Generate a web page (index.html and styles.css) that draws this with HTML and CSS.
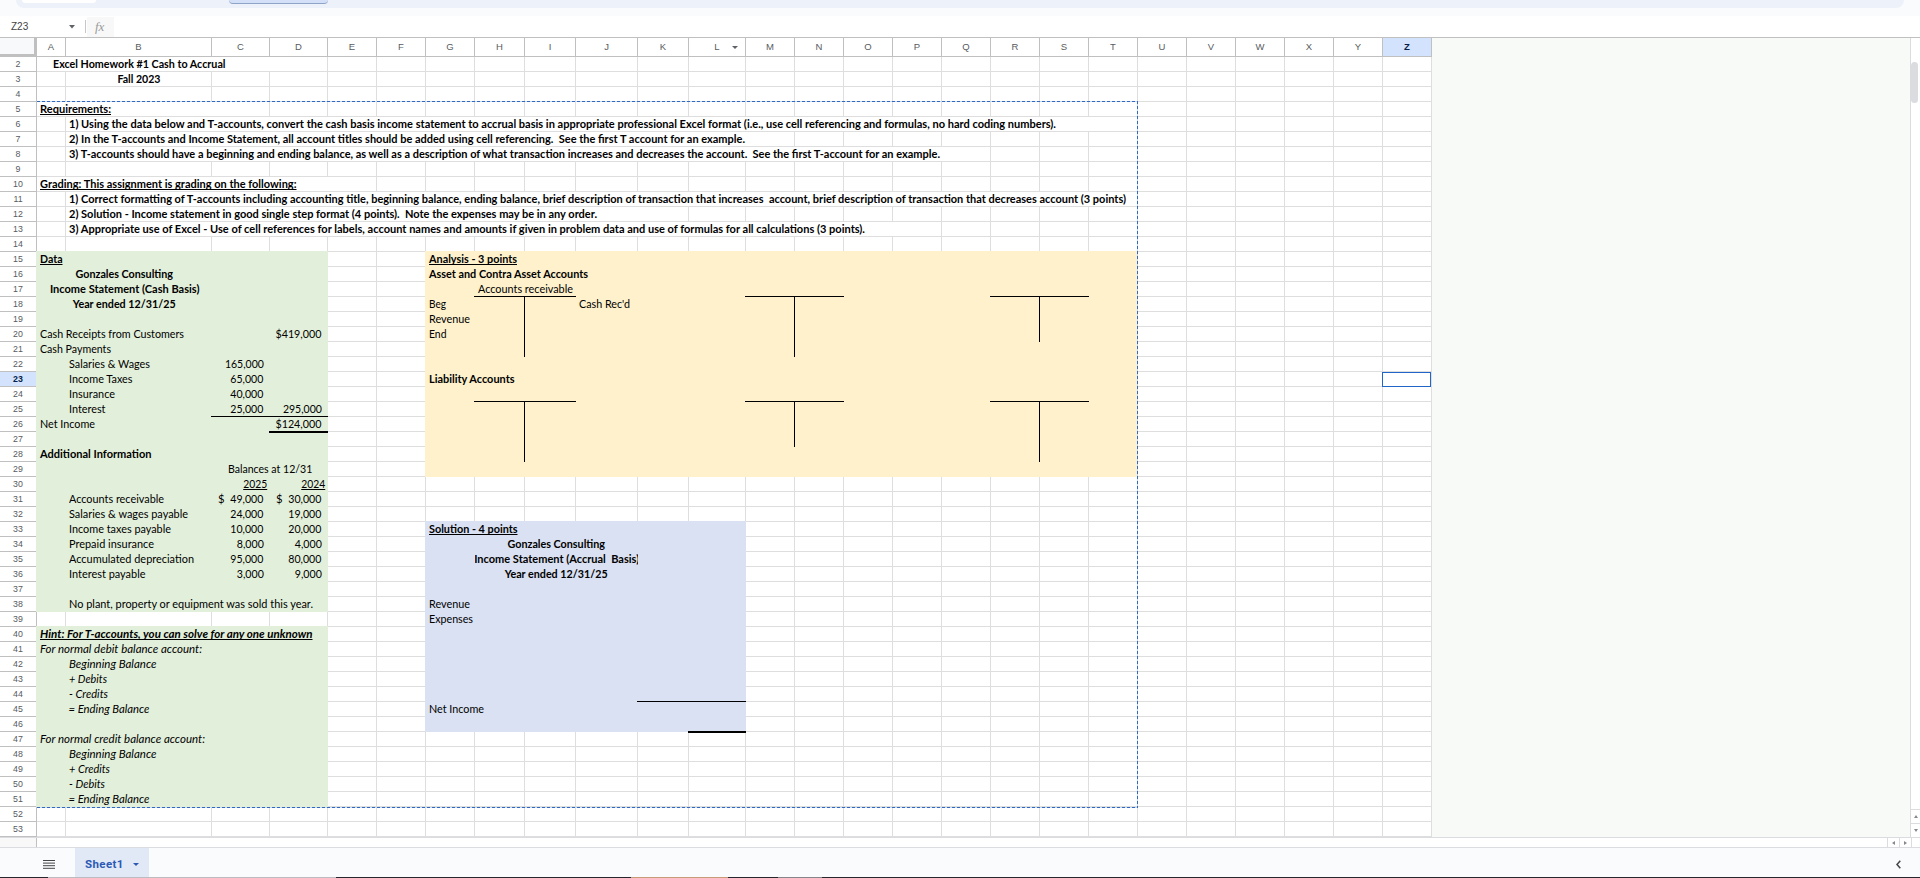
FILE: index.html
```html
<!DOCTYPE html>
<html lang="en">
<head>
<meta charset="utf-8">
<title>Sheet1</title>
<link rel="stylesheet" href="styles.css">
</head>
<body>
<div class="app">
  <div class="toolbar"><div class="menu-pill"></div><div class="active-pill"></div></div>
  <div class="formula-bar">
    <span class="cell-name">Z23</span>
    <svg class="name-arrow" viewBox="0 0 6 4"><path d="M0 0h6L3 3.5z"/></svg>
    <span class="divider"></span>
    <span class="fx">fx</span>
  </div>
  <main class="work">
    <div class="sheet" id="sheet"></div>
    <div class="blank"></div>
    <div class="vscroll">
      <div class="thumb"></div>
      <div class="step"><svg viewBox="0 0 4 3"><path d="M0 3h4L2 0z"/></svg></div>
      <div class="step"><svg viewBox="0 0 4 3"><path d="M0 0h4L2 3z"/></svg></div>
    </div>
  </main>
  <div class="hscroll">
    <div class="hscroll-corner"></div>
    <div class="hstep"><svg viewBox="0 0 3 4"><path d="M3 0v4L0 2z"/></svg></div>
    <div class="hstep"><svg viewBox="0 0 3 4"><path d="M0 0v4l3-2z"/></svg></div>
    <div class="hscroll-end"></div>
  </div>
  <footer class="tabs">
    <svg class="menu" viewBox="0 0 12 9"><path d="M0 .5h12M0 3.1h12M0 5.7h12M0 8.3h12"/></svg>
    <div class="tab"><span>Sheet1</span><svg viewBox="0 0 6 3"><path d="M0 0h6L3 3z"/></svg></div>
    <svg class="chevron" viewBox="0 0 5 9"><path d="M4.3.7L1 4.5l3.3 3.8"/></svg>
  </footer>
  <div class="edge"><i class="dark e1"></i><i class="gray"></i><i class="dark e2"></i><i class="orange"></i><i class="dark e3"></i><i class="silver"></i><i class="dark e4"></i></div>
</div>
<script src="sheet.js"></script>
</body>
</html>
```
FILE: styles.css
```css
* { box-sizing: border-box; }
body { margin: 0; background: #fff; overflow: hidden; font-family: "Liberation Sans", Arial, sans-serif; }
svg { display: block; fill: #5f6368; }
.app { display: flex; flex-direction: column; width: 1920px; height: 878px; }

.toolbar { height: 16px; background: #f9fbfd; display: flex; padding: 0 16px; flex: none; position: relative; }
.toolbar::before { content: ""; position: absolute; left: 16px; right: 16px; top: 0; height: 8px; background: #edf1f9; border-radius: 0 0 12px 12px; }
.menu-pill { position: relative; width: 74px; height: 3px; margin-left: 6px; background: #fff; border-radius: 0 0 6px 6px; }
.active-pill { position: relative; width: 99px; height: 4px; margin-left: 133px; background: #d3e0f7; border-bottom: 1px solid #8fa3c8; border-radius: 0 0 8px 8px; }

.formula-bar { height: 21px; flex: none; display: flex; align-items: center; background: #fff; }
.cell-name { font-size: 10px; color: #444; width: 69px; padding-left: 11px; }
.name-arrow { width: 6px; height: 4px; }
.divider { width: 1px; height: 13px; background: #c7c7c7; margin-left: 10px; }
.fx { width: 27px; height: 20px; margin-left: 1px; background: #f8f8f8; color: #9a9a9a; font: italic 13px/19px "Liberation Serif", serif; padding-left: 8px; }

.work { display: flex; height: 800px; flex: none; overflow: hidden; border-top: 1px solid #c0c0c0; }
.sheet {
  display: grid; flex: none; width: 1432px; height: 799px;
  grid-template-columns: 37px 29px 146px 58px 58px 49px 49px 49px 50px 51px 62px 51px 57px repeat(14, 49px);
  grid-template-rows: 19px repeat(52, 15px);
  overflow: hidden;
}
.cell { border-right: 1px solid #dedede; border-bottom: 1px solid #dedede; }
.corner { background: #f8f9fa; border-right: 3px solid #c0c0c0; border-bottom: 3px solid #c0c0c0; }
.col, .rownum { display: flex; align-items: center; justify-content: center; color: #575b60; border-right: 1px solid #c0c0c0; border-bottom: 1px solid #c0c0c0; }
.col { font-size: 9.5px; padding-bottom: 2px; }
.col svg { width: 6px; height: 3px; margin: 2px 0 0 12px; }
.col.l-col { padding-left: 18px; }
.rownum { font-size: 8.8px; padding-bottom: 1px; }
.selected { background: #d3e3fd; color: #041e49; font-weight: bold; }

.fill { margin: -1px 0 0 -1px; }
.green { background: #e2efda; }
.yellow { background: #fef1cc; }
.blue { background: #d9e1f2; }

.text { display: flex; font-family: Lato, sans-serif; font-size: 11.3px; height: 14px; color: #000; white-space: pre; padding: 0 3px 0 2.5px; overflow: hidden; }
.text span { display: block; flex: none; line-height: 13px; transform-origin: left; }
.mask { background: #fff; }
.b { font-weight: bold; }
.i { font-style: italic; }
.u span { text-decoration: underline; text-underline-offset: 1px; text-decoration-skip-ink: none; }
.c { justify-content: center; }
.c span { transform-origin: center; }
.r { justify-content: flex-end; }
.money { padding-right: 6.5px; justify-content: flex-end; }
.dollars { justify-content: space-between; padding: 0 6.5px 0 6px; }
.r span, .money span, .dollars span:last-child { transform-origin: right; }
.clip { padding: 0; }

.top-line { height: 1px; margin: -1px 0 0 -1px; background: #000; }
.thick-line { height: 2px; margin: -1px 0 0 -1px; background: #000; }
.v-line { width: 1px; margin: -1px 0 0 -1px; background: #000; }

.copied {
  margin: -1px 0 -1px 0;
  background:
    repeating-linear-gradient(90deg, #3568b8 0 3px, #c4dafa 3px 5px) top / 100% 1px no-repeat,
    repeating-linear-gradient(90deg, #3568b8 0 3px, #c4dafa 3px 5px) bottom / 100% 1px no-repeat,
    repeating-linear-gradient(180deg, #3568b8 0 3px, #c4dafa 3px 5px) right / 1px 100% no-repeat;
}
.cursor { margin: 0 1px 0 -1px; border: 1px solid #1f66c8; }

.blank { flex: 1; background: #f8faf7; }
.vscroll { width: 10px; border-left: 1px solid #dadce0; display: flex; flex-direction: column; background: #fff; }
.thumb { width: 7px; height: 41px; margin: 24px 0 auto; background: #dadce0; border-radius: 4px; }
.step { height: 14px; border-top: 1px solid #dadce0; display: flex; align-items: center; justify-content: center; }
.step svg { width: 4px; height: 3px; fill: #85888c; }

.hscroll { height: 11px; flex: none; display: flex; border-top: 1px solid #dadce0; border-bottom: 1px solid #dadce0; background: #fff; }
.hscroll-corner { width: 37px; margin-right: auto; background: #f8f8f8; border-right: 1px solid #c0c0c0; }
.hstep { width: 12px; border-left: 1px solid #dadce0; display: flex; align-items: center; justify-content: center; }
.hstep svg { width: 3px; height: 4px; fill: #85888c; }
.hscroll-end { width: 9px; border-left: 1px solid #dadce0; }

.tabs { height: 29px; flex: none; background: #f9fbfd; display: flex; align-items: center; }
.menu { width: 12px; height: 9px; margin: 3px 0 0 43px; stroke: #444746; stroke-width: 1; }
.tab { margin-left: 20px; width: 74px; height: 29px; background: #e1e9f7; color: #2c59b5; font: bold 11.5px/13px Roboto, sans-serif; padding: 3px 0 0 10px; display: flex; align-items: center; letter-spacing: .4px; }
.tab svg { width: 6px; height: 3px; margin-left: 9px; fill: #2c59b5; }
.chevron { width: 5px; height: 9px; margin: 3px 19px 0 auto; fill: none; stroke: #444746; stroke-width: 1.5; }
.edge { height: 1px; flex: none; display: flex; }
.dark { background: #26242c; }
.gray { background: #bcbcc0; width: 288px; }
.orange { background: #c89a78; width: 97px; }
.silver { background: #85858a; width: 44px; }
.e1 { width: 48px; }
.e2 { width: 295px; }
.e3 { width: 50px; }
.e4 { flex: 1; }
```
FILE: sheet.js
```js
const sheet = document.getElementById('sheet');
const FIRST_ROW = 2, LAST_ROW = 53;
const colIndex = letter => letter.charCodeAt(0) - 63;
const line = row => row - FIRST_ROW + 2;

function add(cls, c1, r1, c2, r2, html) {
  const el = document.createElement('div');
  el.className = cls;
  el.style.gridArea = `${r1} / ${c1} / ${r2} / ${c2}`;
  if (html) el.innerHTML = html;
  sheet.appendChild(el);
  return el;
}
const area = (cls, from, r1, to, r2, html) =>
  add(cls, colIndex(from), line(r1), colIndex(to) + 1, line(r2) + 1, html);

add('corner', 1, 1, 2, 2);
for (let c = 0; c < 26; c++) {
  const name = String.fromCharCode(65 + c);
  const arrow = name === 'L' ? '<svg viewBox="0 0 6 3"><path d="M0 0h6L3 3z"/></svg>' : '';
  add('col' + (name === 'Z' ? ' selected' : '') + (name === 'L' ? ' l-col' : ''), c + 2, 1, c + 3, 2, name + arrow);
}
for (let r = FIRST_ROW; r <= LAST_ROW; r++) {
  add('rownum' + (r === 23 ? ' selected' : ''), 1, line(r), 2, line(r) + 1, String(r));
  for (let c = 2; c < 28; c++) add('cell', c, line(r), c + 1, line(r) + 1);
}

area('fill green', 'A', 15, 'D', 38);
area('fill green', 'A', 40, 'D', 51);
area('fill yellow', 'G', 15, 'T', 29);
area('fill blue', 'G', 33, 'L', 46);

// [row, first column, last column, classes, text, drawn width]
const texts = [
  [2, 'A', 'C', 'b mask title', 'Excel Homework #1 Cash to Accrual', 172.5],
  [3, 'B', 'B', 'b c', 'Fall 2023', 43],
  [5, 'A', 'B', 'b u mask', 'Requirements:', 71],
  [6, 'B', 'S', 'b mask', '1) Using the data below and T-accounts, convert the cash basis income statement to accrual basis in appropriate professional Excel format (i.e., use cell referencing and formulas, no hard coding numbers).', 987],
  [7, 'B', 'L', 'b mask', '2) In the T-accounts and Income Statement, all account titles should be added using cell referencing.  See the first T account for an example.', 676],
  [8, 'B', 'P', 'b mask', '3) T-accounts should have a beginning and ending balance, as well as a description of what transaction increases and decreases the account.  See the first T-account for an example.', 871],
  [10, 'A', 'D', 'b u mask', 'Grading: This assignment is grading on the following:', 256.5],
  [11, 'B', 'T', 'b mask', '1) Correct formatting of T-accounts including accounting title, beginning balance, ending balance, brief description of transaction that increases  account, brief description of transaction that decreases account (3 points)', 1057],
  [12, 'B', 'J', 'b mask', '2) Solution - Income statement in good single step format (4 points).  Note the expenses may be in any order.', 528],
  [13, 'B', 'O', 'b mask', '3) Appropriate use of Excel - Use of cell references for labels, account names and amounts if given in problem data and use of formulas for all calculations (3 points).', 796],
  [15, 'A', 'B', 'b u', 'Data', 22.5],
  [16, 'A', 'B', 'b c', 'Gonzales Consulting', 97.5],
  [17, 'A', 'B', 'b c', 'Income Statement (Cash Basis)', 149.5],
  [18, 'A', 'B', 'b c', 'Year ended 12/31/25', 103],
  [20, 'A', 'B', '', 'Cash Receipts from Customers', 144],
  [21, 'A', 'B', '', 'Cash Payments', 71],
  [22, 'B', 'B', '', 'Salaries & Wages', 81],
  [23, 'B', 'B', '', 'Income Taxes', 63.5],
  [24, 'B', 'B', '', 'Insurance', 46],
  [25, 'B', 'B', '', 'Interest', 36.5],
  [26, 'A', 'B', '', 'Net Income', 55],
  [20, 'D', 'D', 'money', '$419,000', 46],
  [22, 'C', 'C', 'money', '165,000', 39],
  [23, 'C', 'C', 'money', '65,000', 33],
  [24, 'C', 'C', 'money', '40,000', 33],
  [25, 'C', 'C', 'money', '25,000', 33],
  [25, 'D', 'D', 'money', '295,000', 39],
  [26, 'D', 'D', 'money', '$124,000', 46],
  [28, 'A', 'B', 'b', 'Additional Information', 111.5],
  [29, 'C', 'D', 'c', 'Balances at 12/31', 84.5],
  [30, 'C', 'C', 'r u', '2025', 24],
  [30, 'D', 'D', 'r u', '2024', 24],
  [31, 'B', 'B', '', 'Accounts receivable', 95],
  [32, 'B', 'B', '', 'Salaries & wages payable', 119],
  [33, 'B', 'B', '', 'Income taxes payable', 102],
  [34, 'B', 'B', '', 'Prepaid insurance', 85],
  [35, 'B', 'B', '', 'Accumulated depreciation', 125],
  [36, 'B', 'B', '', 'Interest payable', 76.5],
  [31, 'C', 'C', 'dollars', '$|49,000', 33],
  [31, 'D', 'D', 'dollars', '$|30,000', 33],
  [32, 'C', 'C', 'money', '24,000', 33],
  [32, 'D', 'D', 'money', '19,000', 33],
  [33, 'C', 'C', 'money', '10,000', 33],
  [33, 'D', 'D', 'money', '20,000', 33],
  [34, 'C', 'C', 'money', '8,000', 27],
  [34, 'D', 'D', 'money', '4,000', 27],
  [35, 'C', 'C', 'money', '95,000', 33],
  [35, 'D', 'D', 'money', '80,000', 33],
  [36, 'C', 'C', 'money', '3,000', 27],
  [36, 'D', 'D', 'money', '9,000', 27],
  [38, 'B', 'D', '', 'No plant, property or equipment was sold this year.', 244],
  [40, 'A', 'D', 'b i u', 'Hint: For T-accounts, you can solve for any one unknown', 272.5],
  [41, 'A', 'C', 'i', 'For normal debit balance account:', 162],
  [42, 'B', 'B', 'i', 'Beginning Balance', 87.5],
  [43, 'B', 'B', 'i', '+ Debits', 38],
  [44, 'B', 'B', 'i', '- Credits', 39],
  [45, 'B', 'B', 'i', '= Ending Balance', 81],
  [47, 'A', 'C', 'i', 'For normal credit balance account:', 165],
  [48, 'B', 'B', 'i', 'Beginning Balance', 87.5],
  [49, 'B', 'B', 'i', '+ Credits', 41],
  [50, 'B', 'B', 'i', '- Debits', 36],
  [51, 'B', 'B', 'i', '= Ending Balance', 81],
  [15, 'G', 'I', 'b u', 'Analysis - 3 points', 88],
  [16, 'G', 'K', 'b', 'Asset and Contra Asset Accounts', 159],
  [17, 'H', 'I', 'c', 'Accounts receivable', 95],
  [18, 'G', 'G', '', 'Beg', 17],
  [18, 'J', 'J', '', "Cash Rec'd", 51],
  [19, 'G', 'G', '', 'Revenue', 41],
  [20, 'G', 'G', '', 'End', 17.5],
  [23, 'G', 'I', 'b', 'Liability Accounts', 85.5],
  [33, 'G', 'I', 'b u', 'Solution - 4 points', 88.5],
  [34, 'H', 'J', 'b c', 'Gonzales Consulting', 97.5],
  [35, 'H', 'J', 'b c clip', 'Income Statement (Accrual  Basis)', 165],
  [36, 'H', 'J', 'b c', 'Year ended 12/31/25', 103],
  [38, 'G', 'G', '', 'Revenue', 41],
  [39, 'G', 'G', '', 'Expenses', 44],
  [45, 'G', 'H', '', 'Net Income', 55]
];
const CENTER_B = 102;
for (const [row, from, to, cls, text, width] of texts) {
  const html = text.split('|').map(t => `<span>${t.replace('&', '&amp;')}</span>`).join('');
  const el = area('text ' + cls, from, row, to, row, html);
  const span = el.lastElementChild;
  const natural = span.getBoundingClientRect().width;
  span.style.transform = `scaleX(${width / natural})`;
  if (cls.includes('title')) el.style.paddingLeft = CENTER_B - width / 2 + 'px';
}

area('top-line', 'C', 26, 'D', 26);
area('thick-line', 'D', 27, 'D', 27);
area('top-line', 'K', 45, 'L', 45);
area('thick-line', 'L', 47, 'L', 47);
// T-accounts: [left column, right column, first row, last row]
[['H', 'I', 18, 21], ['M', 'N', 18, 21], ['R', 'S', 18, 20],
 ['H', 'I', 25, 28], ['M', 'N', 25, 27], ['R', 'S', 25, 28]].forEach(([l, r, a, b]) => {
  area('top-line', l, a, r, a);
  area('v-line', r, a, r, b);
});
area('copied', 'A', 5, 'T', 51);
area('cursor', 'Z', 23, 'Z', 23);
```
